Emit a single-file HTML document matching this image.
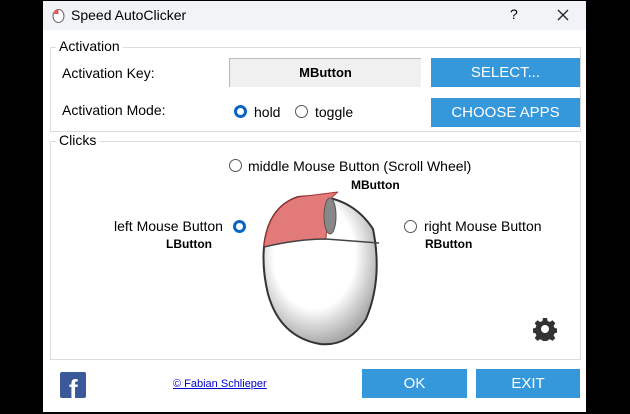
<!DOCTYPE html>
<html><head><style>
body{margin:0;width:630px;height:414px;background:#000;position:relative;overflow:hidden;font-family:"Liberation Sans",sans-serif;color:#000}
.win{position:absolute;left:43px;top:1px;width:543px;height:411px;background:#fff}
.title{position:absolute;left:0;top:0;width:543px;height:29px;background:#f1f3f7}
.a{position:absolute;white-space:nowrap}
.grp{position:absolute;border:1px solid #dcdcdc}
.lbl{position:absolute;background:#fff;padding:0 3px;font-size:14px}
.btn{position:absolute;background:#3598db;color:#fff;font-size:15px;text-align:center}
.rad{position:absolute;width:11px;height:11px;border:1px solid #555;border-radius:50%;background:#fff}
.rad.on{border:3px solid #0a64c8;width:7px;height:7px}
</style></head><body>
<div class="win">
 <div class="title">
  <svg class="a" style="left:9px;top:7px" width="13" height="15" viewBox="0 0 13 15"><ellipse cx="6.5" cy="8" rx="5.5" ry="6.5" fill="#fff" stroke="#666"/><path d="M1.5 6 Q2 1.5 6.5 1.5 L6.5 6 Z" fill="#e06060"/></svg>
  <div class="a" style="left:28px;top:6px;font-size:14px">Speed AutoClicker</div>
  <div class="a" style="left:467px;top:5px;font-size:14px">?</div>
  <svg class="a" style="left:514px;top:8px" width="12" height="12" viewBox="0 0 12 12"><path d="M1 1L11 11M11 1L1 11" stroke="#222" stroke-width="1.3"/></svg>
 </div>
 <div class="grp" style="left:7px;top:46px;width:529px;height:83px"></div>
 <div class="lbl" style="left:13px;top:37px">Activation</div>
 <div class="a" style="left:19px;top:64px;font-size:14px">Activation Key:</div>
 <div class="a" style="left:186px;top:57px;width:191px;height:28px;background:#f0f0f0;border-top:1px solid #bbb;border-left:1px solid #bbb;font-size:13px;font-weight:bold;text-align:center;line-height:28px">MButton</div>
 <div class="btn" style="left:388px;top:57px;width:149px;height:29px;line-height:29px">SELECT...</div>
 <div class="a" style="left:19px;top:101px;font-size:14px">Activation Mode:</div>
 <div class="rad on" style="left:191px;top:104px"></div>
 <div class="a" style="left:211px;top:103px;font-size:14px">hold</div>
 <div class="rad" style="left:252px;top:104px"></div>
 <div class="a" style="left:272px;top:103px;font-size:14px">toggle</div>
 <div class="btn" style="left:388px;top:97px;width:149px;height:29px;line-height:29px">CHOOSE APPS</div>

 <div class="grp" style="left:7px;top:140px;width:529px;height:217px"></div>
 <div class="lbl" style="left:13px;top:131px">Clicks</div>
 <div class="rad" style="left:186px;top:158px"></div>
 <div class="a" style="left:205px;top:157px;font-size:14px">middle Mouse Button (Scroll Wheel)</div>
 <div class="a" style="left:308px;top:177px;font-size:12px;font-weight:bold">MButton</div>
 <div class="a" style="left:71px;top:217px;font-size:14px">left Mouse Button</div>
 <div class="rad on" style="left:190px;top:219px"></div>
 <div class="a" style="left:123px;top:236px;font-size:12px;font-weight:bold">LButton</div>
 <div class="rad" style="left:361px;top:219px"></div>
 <div class="a" style="left:381px;top:217px;font-size:14px">right Mouse Button</div>
 <div class="a" style="left:382px;top:236px;font-size:12px;font-weight:bold">RButton</div>

 <svg class="a" style="left:215px;top:188px" width="130" height="160" viewBox="0 0 130 160">
  <defs><radialGradient id="g" cx="0.45" cy="0.4" r="0.6"><stop offset="0.6" stop-color="#fff"/><stop offset="1" stop-color="#aaa"/></radialGradient></defs>
  <path d="M6 58 Q10 18 40 8 Q90 2 115 40 Q125 90 108 130 Q90 158 62 155 Q22 148 10 105 Q4 80 6 58Z" fill="url(#g)" stroke="#333" stroke-width="2"/>
  <path d="M6 58 Q10 18 40 8 L80 3 Q70 10 70 20 L68 50 Q40 50 6 58Z" fill="#e27a7a" stroke="#a33" stroke-width="1"/>
  <path d="M6 58 Q40 50 68 50 L121 54" fill="none" stroke="#444" stroke-width="1.5"/>
  <ellipse cx="72" cy="27" rx="6" ry="18" fill="#888" stroke="#555"/>
 </svg>

 <svg class="a" style="left:490px;top:316px" width="24" height="24" viewBox="0 0 24 24"><path fill="#333" d="M10 1h4l.6 3 2.3 1 2.6-1.7 2.8 2.8-1.7 2.6 1 2.3 3 .6v4l-3 .6-1 2.3 1.7 2.6-2.8 2.8-2.6-1.7-2.3 1-.6 3h-4l-.6-3-2.3-1-2.6 1.7-2.8-2.8 1.7-2.6-1-2.3-3-.6v-4l3-.6 1-2.3-1.7-2.6 2.8-2.8 2.6 1.7 2.300-1z"/><circle cx="12" cy="12" r="4" fill="#fff"/></svg>

 <div class="a" style="left:17px;top:371px;width:26px;height:26px;background:#3b5998;border-radius:2px;overflow:hidden"><div class="a" style="left:9px;top:2px;color:#fff;font-weight:bold;font-size:26px;line-height:30px">f</div></div>
 <div class="a" style="left:130px;top:377px;font-size:11px;color:#00c;text-decoration:underline">© Fabian Schlieper</div>
 <div class="btn" style="left:319px;top:368px;width:105px;height:29px;line-height:29px">OK</div>
 <div class="btn" style="left:433px;top:368px;width:104px;height:29px;line-height:29px">EXIT</div>
</div>
</body></html>
